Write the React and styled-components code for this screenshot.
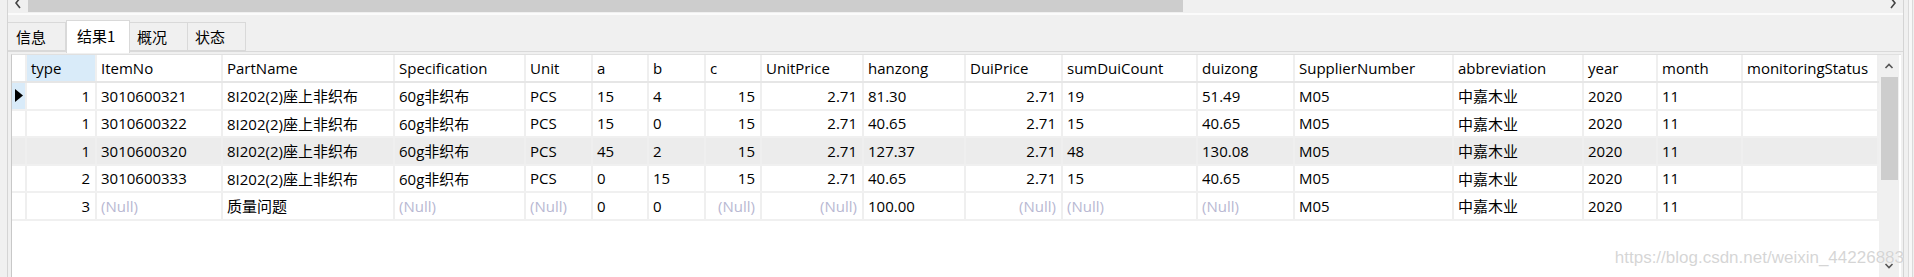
import styled, { createGlobalStyle } from "styled-components";

const GlobalStyle = createGlobalStyle`
  html, body {
    margin: 0;
    padding: 0;
    background: #f0f0f0;
  }
  body {
    font-family: "Open Sans", "Noto Sans CJK SC", sans-serif;
  }
`;

const columns = [
  { key: "type", title: "type", width: 70, align: "right" },
  { key: "itemNo", title: "ItemNo", width: 126 },
  { key: "partName", title: "PartName", width: 172 },
  { key: "spec", title: "Specification", width: 131 },
  { key: "unit", title: "Unit", width: 67 },
  { key: "a", title: "a", width: 56 },
  { key: "b", title: "b", width: 57 },
  { key: "c", title: "c", width: 56, align: "right" },
  { key: "unitPrice", title: "UnitPrice", width: 102, align: "right" },
  { key: "hanzong", title: "hanzong", width: 102 },
  { key: "duiPrice", title: "DuiPrice", width: 97, align: "right" },
  { key: "sumDuiCount", title: "sumDuiCount", width: 135 },
  { key: "duizong", title: "duizong", width: 97 },
  { key: "supplier", title: "SupplierNumber", width: 159 },
  { key: "abbr", title: "abbreviation", width: 130 },
  { key: "year", title: "year", width: 74 },
  { key: "month", title: "month", width: 85 },
  { key: "status", title: "monitoringStatus", width: 136 },
];

const NULL = null;

const rows = [
  { type: "1", itemNo: "3010600321", partName: "8I202(2)座上非织布", spec: "60g非织布", unit: "PCS", a: "15", b: "4", c: "15", unitPrice: "2.71", hanzong: "81.30", duiPrice: "2.71", sumDuiCount: "19", duizong: "51.49", supplier: "M05", abbr: "中嘉木业", year: "2020", month: "11", status: "" },
  { type: "1", itemNo: "3010600322", partName: "8I202(2)座上非织布", spec: "60g非织布", unit: "PCS", a: "15", b: "0", c: "15", unitPrice: "2.71", hanzong: "40.65", duiPrice: "2.71", sumDuiCount: "15", duizong: "40.65", supplier: "M05", abbr: "中嘉木业", year: "2020", month: "11", status: "" },
  { type: "1", itemNo: "3010600320", partName: "8I202(2)座上非织布", spec: "60g非织布", unit: "PCS", a: "45", b: "2", c: "15", unitPrice: "2.71", hanzong: "127.37", duiPrice: "2.71", sumDuiCount: "48", duizong: "130.08", supplier: "M05", abbr: "中嘉木业", year: "2020", month: "11", status: "" },
  { type: "2", itemNo: "3010600333", partName: "8I202(2)座上非织布", spec: "60g非织布", unit: "PCS", a: "0", b: "15", c: "15", unitPrice: "2.71", hanzong: "40.65", duiPrice: "2.71", sumDuiCount: "15", duizong: "40.65", supplier: "M05", abbr: "中嘉木业", year: "2020", month: "11", status: "" },
  { type: "3", itemNo: NULL, partName: "质量问题", spec: NULL, unit: NULL, a: "0", b: "0", c: NULL, unitPrice: NULL, hanzong: "100.00", duiPrice: NULL, sumDuiCount: NULL, duizong: NULL, supplier: "M05", abbr: "中嘉木业", year: "2020", month: "11", status: "" },
];

const template = `15px ${columns.map((c) => c.width + "px").join(" ")}`;

const tabs = [
  { label: "信息", width: 58 },
  { label: "结果1", width: 64 },
  { label: "概况", width: 58 },
  { label: "状态", width: 58 },
];

const ChevronLeft = () => (
  <svg width="8" height="10" viewBox="0 0 8 10">
    <path d="M6 -2 L2 3 L6 8" fill="none" stroke="#444" strokeWidth="1.6" />
  </svg>
);

const ChevronRight = () => (
  <svg width="8" height="10" viewBox="0 0 8 10">
    <path d="M2 -2 L6 3 L2 8" fill="none" stroke="#444" strokeWidth="1.6" />
  </svg>
);

const ChevronUp = () => (
  <svg width="10" height="8" viewBox="0 0 10 8">
    <path d="M1.5 6 L5 2.5 L8.5 6" fill="none" stroke="#555" strokeWidth="1.6" />
  </svg>
);

const ChevronDown = () => (
  <svg width="10" height="8" viewBox="0 0 10 8">
    <path d="M1.5 2 L5 5.5 L8.5 2" fill="none" stroke="#555" strokeWidth="1.6" />
  </svg>
);

const RowPointer = () => (
  <svg width="8" height="13" viewBox="0 0 8 13">
    <path d="M0 0 L8 6.5 L0 13 Z" fill="#000" />
  </svg>
);

const App = () => {
  return (
    <>
      <GlobalStyle />
      <Page>
        <Main>
          <HScroll>
            <ArrowBox>
              <ChevronLeft />
            </ArrowBox>
            <HThumb />
            <Track />
            <ArrowBox>
              <ChevronRight />
            </ArrowBox>
          </HScroll>
          <TabStrip>
            {tabs.map((t, i) => (
              <Tab key={t.label} active={i === 1} first={i === 0} w={t.width}>
                {t.label}
              </Tab>
            ))}
          </TabStrip>
          <TabPanel>
            <Grid>
              <Table>
                <HeaderRow>
                  <HeaderCell />
                  {columns.map((c, i) => (
                    <HeaderCell key={c.key} focused={i === 0}>
                      {c.title}
                    </HeaderCell>
                  ))}
                </HeaderRow>
                {rows.map((r, ri) => (
                  <Row key={ri} selected={ri === 2}>
                    <Indicator current={ri === 0}>
                      {ri === 0 && <RowPointer />}
                    </Indicator>
                    {columns.map((c) => {
                      const v = r[c.key];
                      return (
                        <Cell key={c.key} align={c.align} isNull={v === NULL}>
                          {v === NULL ? "(Null)" : v}
                        </Cell>
                      );
                    })}
                  </Row>
                ))}
              </Table>
              <VScroll>
                <VArrow>
                  <ChevronUp />
                </VArrow>
                <VThumb />
                <Track />
                <VArrow>
                  <ChevronDown />
                </VArrow>
              </VScroll>
            </Grid>
          </TabPanel>
        </Main>
        <Splitter />
        <Watermark>https://blog.csdn.net/weixin_44226883</Watermark>
      </Page>
    </>
  );
};

export default App;

const Page = styled.div`
  position: relative;
  width: 1914px;
  height: 277px;
  overflow: hidden;
  display: flex;
  background: #f0f0f0;
  padding-left: 7px;
  box-sizing: border-box;
`;

const Main = styled.div`
  width: 1895px;
  display: flex;
  flex-direction: column;
  border-left: 1px solid #d4d4d4;
  border-right: 1px solid #d4d4d4;
`;

const Splitter = styled.div`
  width: 3px;
  margin-left: 4px;
  border-left: 1px solid #dadada;
  border-right: 1px solid #dadada;
  background: #f7f7f7;
`;

const HScroll = styled.div`
  height: 13px;
  display: flex;
  align-items: flex-start;
  background: #f0f0f0;
  border-bottom: 2px solid #fbfbfb;
`;

const ArrowBox = styled.div`
  width: 20px;
  height: 13px;
  display: flex;
  justify-content: center;
  align-items: flex-start;
`;

const HThumb = styled.div`
  width: 1155px;
  height: 12px;
  background: #cdcdcd;
`;

const Track = styled.div`
  flex: 1;
`;

const TabStrip = styled.div`
  display: flex;
  align-items: flex-end;
  height: 36px;
`;

const Tab = styled.div`
  box-sizing: border-box;
  width: ${(p) => p.w}px;
  height: ${(p) => (p.active ? "33px" : "29px")};
  padding: 0 0 ${(p) => (p.active ? "3px" : "0")} ${(p) => (p.active ? "10px" : "7px")};
  margin-bottom: ${(p) => (p.active ? "-2px" : "0")};
  display: flex;
  align-items: center;
  font-family: "Noto Sans CJK SC", "Open Sans", sans-serif;
  font-size: 15px;
  color: #000;
  background: ${(p) => (p.active ? "#ffffff" : "#f0f0f0")};
  border-top: 1px solid #d9d9d9;
  border-right: 1px solid #d9d9d9;
  border-left: ${(p) => (p.active ? "1px solid #d9d9d9" : "none")};
  border-bottom: ${(p) => (p.active ? "none" : "1px solid #d9d9d9")};
  position: relative;
  z-index: ${(p) => (p.active ? 1 : 0)};
  padding-left: ${(p) => (p.first ? "8px" : undefined)};
`;

const TabPanel = styled.div`
  flex: 1;
  border-top: 1px solid #d9d9d9;
  padding: 2px 2px 0 4px;
  display: flex;
`;

const Grid = styled.div`
  flex: 1;
  display: flex;
  background: #ffffff;
  border-left: 1px solid #c8c8c8;
  border-top: 1px solid #e0e0e0;
  margin-left: -1px;
`;

const Table = styled.div`
  width: 1867px;
  display: flex;
  flex-direction: column;
`;

const HeaderRow = styled.div`
  display: grid;
  grid-template-columns: ${template};
  height: 28px;
  border-bottom: 2px solid #e6e6e6;
  box-sizing: border-box;
`;

const HeaderCell = styled.div`
  display: flex;
  align-items: center;
  padding: 0 4px;
  font-size: 15px;
  color: #000;
  white-space: nowrap;
  overflow: hidden;
  background: ${(p) => (p.focused ? "#d9ebf9" : "#ffffff")};
  border-right: 2px solid #efefef;
`;

const Row = styled.div`
  display: grid;
  grid-template-columns: ${template};
  height: 27.5px;
  box-sizing: border-box;
  border-bottom: 2px solid #f0f0f0;
  background: ${(p) => (p.selected ? "#ececec" : "#ffffff")};
`;

const Indicator = styled.div`
  display: flex;
  align-items: center;
  padding-left: 3px;
  background: ${(p) => (p.current ? "#d9ebf9" : "transparent")};
  border-right: 2px solid #efefef;
`;

const Cell = styled.div`
  display: flex;
  align-items: center;
  justify-content: ${(p) => (p.align === "right" ? "flex-end" : "flex-start")};
  padding: 0 5px 0 4px;
  font-size: 15px;
  color: ${(p) => (p.isNull ? "#b8b8d2" : "#000")};
  white-space: nowrap;
  overflow: hidden;
  border-right: 2px solid #efefef;
`;

const VScroll = styled.div`
  width: 20px;
  display: flex;
  flex-direction: column;
  align-items: center;
  background: #f0f0f0;
`;

const VArrow = styled.div`
  height: 22px;
  display: flex;
  align-items: center;
  justify-content: center;
`;

const VThumb = styled.div`
  width: 17px;
  height: 103px;
  background: #cdcdcd;
`;

const Watermark = styled.div`
  position: absolute;
  right: 10px;
  top: 248px;
  font-family: "Liberation Sans", Arial, sans-serif;
  font-size: 17px;
  color: rgba(200, 200, 200, 0.75);
  text-shadow: 0 0 1px rgba(255, 255, 255, 0.8);
  white-space: nowrap;
  pointer-events: none;
`;
